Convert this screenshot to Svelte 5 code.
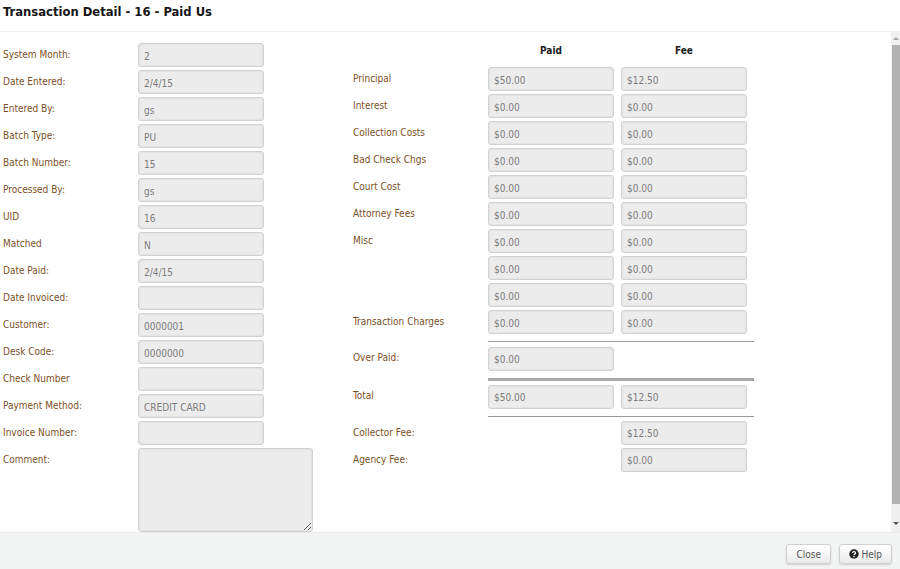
<script lang="ts">
	const leftFields = [
		['System Month:', '2'],
		['Date Entered:', '2/4/15'],
		['Entered By:', 'gs'],
		['Batch Type:', 'PU'],
		['Batch Number:', '15'],
		['Processed By:', 'gs'],
		['UID', '16'],
		['Matched', 'N'],
		['Date Paid:', '2/4/15'],
		['Date Invoiced:', ''],
		['Customer:', '0000001'],
		['Desk Code:', '0000000'],
		['Check Number', ''],
		['Payment Method:', 'CREDIT CARD'],
		['Invoice Number:', '']
	];

	const amounts = [
		['Principal', '$50.00', '$12.50'],
		['Interest', '$0.00', '$0.00'],
		['Collection Costs', '$0.00', '$0.00'],
		['Bad Check Chgs', '$0.00', '$0.00'],
		['Court Cost', '$0.00', '$0.00'],
		['Attorney Fees', '$0.00', '$0.00'],
		['Misc', '$0.00', '$0.00'],
		['', '$0.00', '$0.00'],
		['', '$0.00', '$0.00'],
		['Transaction Charges', '$0.00', '$0.00']
	];
</script>

<div class="dialog">
	<header class="title-bar">
		<h1>Transaction Detail - 16 - Paid Us</h1>
	</header>

	<div class="middle">
		<main class="content">
			<section class="left">
				{#each leftFields as [label, value]}
					<div class="row">
						<span class="label">{label}</span>
						<div class="field">{value}</div>
					</div>
				{/each}
				<div class="row">
					<span class="label">Comment:</span>
					<textarea class="comment" disabled></textarea>
				</div>
			</section>

			<section class="right">
				<div class="row heads">
					<span class="label"></span>
					<b>Paid</b>
					<b>Fee</b>
				</div>
				{#each amounts as [label, paid, fee]}
					<div class="row">
						<span class="label">{label}</span>
						<div class="field">{paid}</div>
						<div class="field">{fee}</div>
					</div>
				{/each}
				<hr class="rule after-rows" />
				<div class="row tight raised">
					<span class="label">Over Paid:</span>
					<div class="field">$0.00</div>
				</div>
				<hr class="rule thick" />
				<div class="row tight raised">
					<span class="label">Total</span>
					<div class="field">$50.00</div>
					<div class="field">$12.50</div>
				</div>
				<hr class="rule after-total" />
				<div class="row tight">
					<span class="label">Collector Fee:</span>
					<span></span>
					<div class="field">$12.50</div>
				</div>
				<div class="row tight">
					<span class="label">Agency Fee:</span>
					<span></span>
					<div class="field">$0.00</div>
				</div>
			</section>
		</main>

		<div class="scrollbar">
			<span class="arrow up"></span>
			<div class="thumb"></div>
			<span class="arrow down"></span>
		</div>
	</div>

	<footer class="footer">
		<button type="button" class="close">Close</button>
		<button type="button">
			<svg viewBox="0 0 12 12" width="10" height="10" aria-hidden="true">
				<circle cx="6" cy="6" r="5.7" fill="#222" />
				<path d="M4.2 4.7a1.8 1.6 0 1 1 2.7 1.4c-.6.4-.9.6-.9 1.2" fill="none" stroke="#fff" stroke-width="1.5" />
				<rect x="5.2" y="8.2" width="1.6" height="1.6" fill="#fff" />
			</svg>
			Help
		</button>
	</footer>
</div>

<style>
	:global(body) {
		background: #fff;
	}

	.dialog {
		height: 100vh;
		display: flex;
		flex-direction: column;
		overflow: hidden;
		font-family: 'DejaVu Sans', Verdana, sans-serif;
		font-stretch: condensed;
		font-size: 10px;
	}

	.title-bar {
		flex: none;
		border-bottom: 1px solid #eeeeee;
		padding: 3px 0 0 3px;
		height: 28px;
	}

	h1 {
		margin: 0;
		font-size: 12.9px;
		line-height: 17px;
		font-weight: 700;
		color: #151515;
	}

	.middle {
		flex: 1;
		min-height: 0;
		display: flex;
	}

	.content {
		flex: 1;
		min-width: 0;
		overflow: hidden;
		display: flex;
		padding: 11px 0 0 3px;
		gap: 40px;
	}

	.left,
	.right {
		display: flex;
		flex-direction: column;
		gap: 3px;
		flex: none;
	}

	.left {
		width: 310px;
	}

	.row {
		display: flex;
		align-items: flex-start;
		gap: 7px;
	}

	.left .row {
		gap: 0;
	}

	.label {
		width: 135px;
		flex: none;
		padding-top: 5px;
		line-height: 13px;
		color: #7b4f27;
		white-space: nowrap;
	}

	.right .label {
		margin-right: -7px;
	}

	.raised .label {
		padding-top: 4px;
	}

	.right .row > span:not(.label) {
		width: 126px;
		flex: none;
	}

	.field {
		width: 126px;
		height: 24px;
		flex: none;
		box-sizing: border-box;
		background: #ececec;
		border: 1px solid #d2d2d2;
		border-radius: 3px;
		box-shadow: inset 0 0 0 1px #e4e4e4;
		padding: 6px 5px 0;
		line-height: 14px;
		color: #7c7c7c;
	}

	.tight .field {
		padding-top: 5px;
	}

	.comment {
		display: block;
		width: 175px;
		height: 84px;
		flex: none;
		box-sizing: border-box;
		margin: 0;
		background: #ececec;
		border: 1px solid #d2d2d2;
		border-radius: 3px;
		box-shadow: inset 0 0 0 1px #e4e4e4;
		resize: both;
	}

	.heads {
		height: 21px;
		padding-top: 1px;
		box-sizing: border-box;
	}

	.heads b {
		width: 126px;
		flex: none;
		text-align: center;
		line-height: 14px;
		color: #1c1c1c;
	}

	.rule {
		width: 266px;
		height: 0;
		margin: 0 0 0 135px;
		border: 0;
		border-top: 1px solid #9b9b9b;
	}

	.after-rows {
		margin-top: 4px;
		margin-bottom: 2px;
	}

	.thick {
		height: 3px;
		border: 0;
		background: #a8a8a8;
		margin-top: 4px;
		margin-bottom: 1px;
	}

	.after-total {
		margin-top: 4px;
		margin-bottom: 1px;
	}

	.scrollbar {
		width: 9px;
		flex: none;
		background: #f0f0f0;
		display: flex;
		flex-direction: column;
		align-items: center;
		padding-top: 5px;
		box-sizing: border-box;
	}

	.thumb {
		width: 8px;
		height: 459px;
		margin-top: 5px;
		margin-left: 1px;
		background: #b3b3b3;
	}

	.arrow {
		width: 0;
		height: 0;
		border-left: 3px solid transparent;
		border-right: 3px solid transparent;
	}

	.arrow.up {
		border-bottom: 3px solid #a5a5a5;
	}

	.arrow.down {
		margin-top: 18px;
		border-top: 3px solid #505050;
	}

	.footer {
		height: 37px;
		flex: none;
		box-sizing: border-box;
		background: #f3f5f5;
		border-top: 1px solid #ebebeb;
		display: flex;
		justify-content: flex-end;
		align-items: flex-start;
		gap: 8px;
		padding: 11px 8px 0 0;
	}

	button {
		height: 20px;
		padding: 0 9px;
		display: inline-flex;
		align-items: center;
		gap: 2px;
		font: inherit;
		color: #555;
		background: linear-gradient(#ffffff, #ebebeb);
		border: 1px solid #d0d0d0;
		border-radius: 3px;
		box-shadow: 0 1px 2px rgba(0, 0, 0, 0.15);
	}

	.close {
		padding: 0 9.5px;
	}
</style>
